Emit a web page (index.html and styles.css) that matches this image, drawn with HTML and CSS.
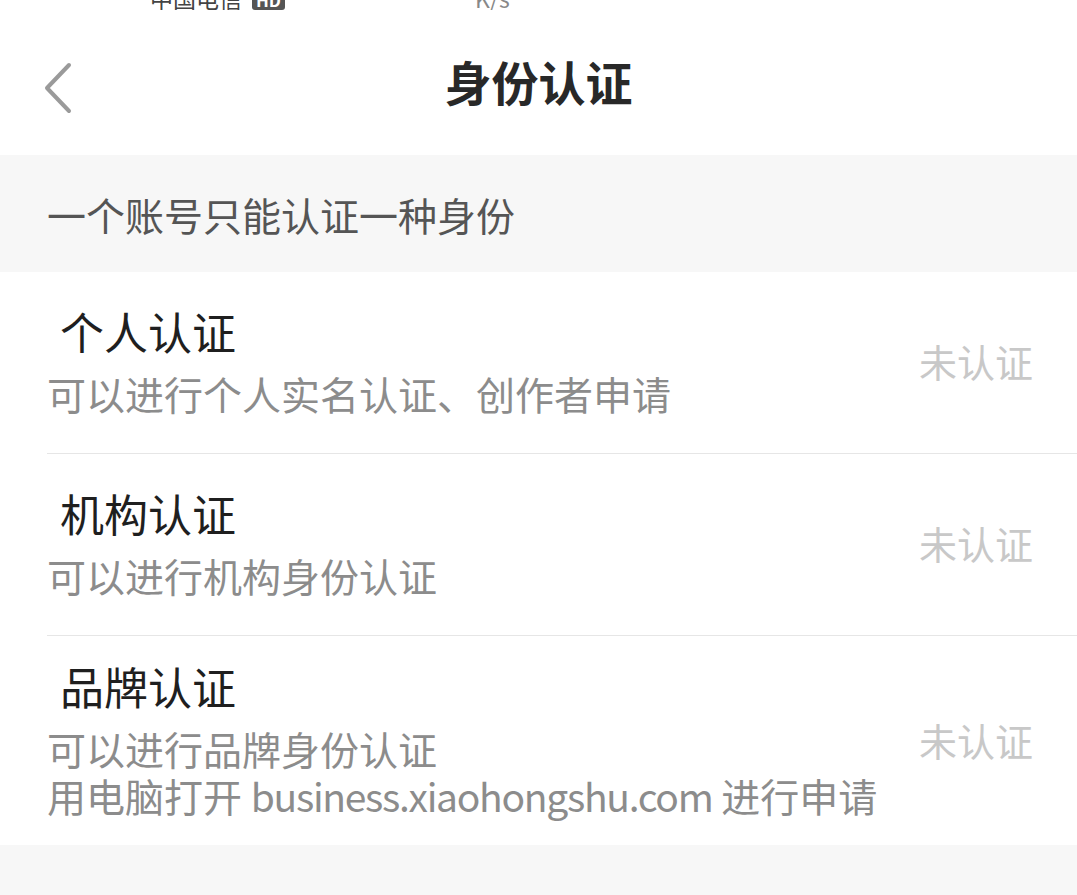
FILE: index.html
```
<!DOCTYPE html>
<html lang="zh-CN">
<head>
<meta charset="UTF-8" />
<meta name="viewport" content="width=device-width, initial-scale=1" />
<title>身份认证</title>
<link rel="stylesheet" href="styles.css">
</head>
<body>
  <div class="status">
    <span class="carrier">中国电信</span>
    <span class="hd">HD</span>
    <span class="speed">K/s</span>
  </div>

  <div class="header">
    <a class="back" href="#">
      <svg width="30" height="54" viewBox="0 0 30 54">
        <path d="M26 3 L4 26 L26 49" fill="none" stroke="#9a9a9a" stroke-width="4" stroke-linecap="round" stroke-linejoin="round" />
      </svg>
    </a>
    <h1>身份认证</h1>
  </div>

  <div class="notice">一个账号只能认证一种身份</div>

  <div class="list">
    <div class="item">
      <div class="item-main">
        <div class="item-title">个人认证</div>
        <div class="item-desc">可以进行个人实名认证、创作者申请</div>
      </div>
      <div class="item-state">未认证</div>
    </div>
    <div class="item">
      <div class="item-main">
        <div class="item-title">机构认证</div>
        <div class="item-desc">可以进行机构身份认证</div>
      </div>
      <div class="item-state">未认证</div>
    </div>
    <div class="item item-last">
      <div class="item-main">
        <div class="item-title">品牌认证</div>
        <div class="item-desc">可以进行品牌身份认证</div>
        <div class="item-desc">用电脑打开 <span class="url">business.xiaohongshu.com</span> 进行申请</div>
      </div>
      <div class="item-state">未认证</div>
    </div>
  </div>

  <div class="footer"></div>
</body>
</html>
```

FILE: styles.css
```
body, html {
  margin: 0; padding: 0;
  background: #f7f7f7;
  font-family: "Noto Sans CJK SC", "Noto Sans", sans-serif;
  overflow: hidden;
}
.status {
  height: 10px;
  overflow: hidden;
  background: #fff;
  display: flex;
  align-items: flex-end;
  padding-left: 150px;
  gap: 10px;
  font-size: 23px;
  line-height: 23px;
  color: #444;
}
.status .hd {
  background: #555;
  color: #fff;
  font-size: 17px;
  line-height: 20px;
  padding: 0 4px;
  border-radius: 3px;
  font-weight: bold;
}
.status .speed {
  margin-left: 180px;
  color: #888;
}
.header {
  height: 141px;
  padding-bottom: 4px;
  background: #fff;
  display: flex;
  align-items: center;
  justify-content: center;
  position: relative;
}
.header h1 {
  margin: 0;
  font-size: 47px;
  font-weight: 700;
  color: #282828;
}
.back {
  position: absolute;
  left: 43px;
  top: 52px;
  display: block;
  line-height: 0;
}
.notice {
  height: 117px;
  display: flex;
  align-items: center;
  padding-left: 47px;
  font-size: 39px;
  color: #555;
}
.list {
  background: #fff;
}
.item {
  margin-left: 47px;
  padding: 33px 44px 37px 0;
  border-bottom: 1px solid #e6e6e6;
  display: flex;
  align-items: center;
  justify-content: space-between;
}
.item-last {
  padding: 24px 44px 26px 0;
  border-bottom: none;
}
.item-title {
  padding-left: 13px;
  font-size: 44px;
  line-height: 52px;
  color: #1f1f1f;
  margin-bottom: 13px;
}
.item-desc {
  font-size: 39px;
  line-height: 46px;
  color: #8c8c8c;
  white-space: nowrap;
}
.item-last .item-desc {
  line-height: 47px;
}
.item-desc .url {
  letter-spacing: -1.3px;
}
.item-state {
  font-size: 38px;
  color: #c8c8c8;
}
.footer {
  height: 60px;
  background: #f7f7f7;
}
```
